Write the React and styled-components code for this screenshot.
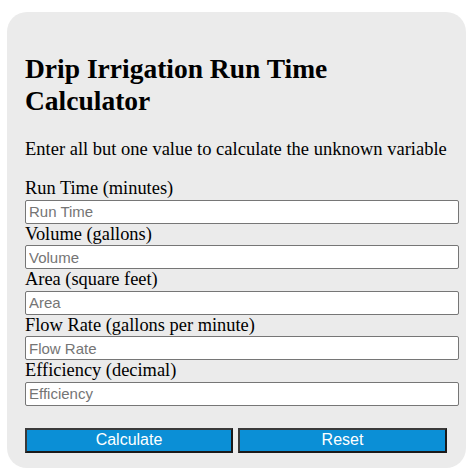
import React from 'react';
import styled, { createGlobalStyle } from 'styled-components';

const GlobalStyle = createGlobalStyle`
  html, body {
    margin: 0;
    padding: 0;
    background: #ffffff;
  }
  body {
    font-family: "Liberation Serif", "Times New Roman", serif;
    color: #000;
  }
`;

const Page = styled.div`
  padding: 12px 8px 3px 7px;
`;

const Card = styled.div`
  background-color: #ebebeb;
  border-radius: 20px;
  padding: 20px 19px 15px 18px;
  width: 422px;
`;

const Title = styled.h2`
  font-size: 27.5px;
  font-weight: bold;
  line-height: 32px;
  margin: 21px 0 21px;
`;

const Intro = styled.p`
  font-size: 18.5px;
  line-height: 22px;
  white-space: nowrap;
  margin: 0 0 18px;
`;

const Field = styled.div`
  display: flex;
  flex-direction: column;
`;

const Label = styled.label`
  font-size: 18.4px;
  line-height: 21.5px;
`;

const Input = styled.input`
  box-sizing: border-box;
  width: 434px;
  height: 24px;
  padding: 1px 3px;
  border: 1px solid #767676;
  border-radius: 2px;
  background: #fff;
  font-family: "Liberation Sans", Arial, sans-serif;
  font-size: 15px;

  &::placeholder {
    color: #757575;
  }
`;

const ButtonRow = styled.div`
  display: grid;
  grid-template-columns: 208px 209px;
  column-gap: 5px;
  margin-top: 22px;
`;

const Button = styled.button`
  height: 25px;
  background-color: #0b8fd6;
  color: #fff;
  border: 2px solid #1a1a1a;
  border-top-color: #3a3a3a;
  border-left-color: #3a3a3a;
  font-family: "Liberation Sans", Arial, sans-serif;
  font-size: 16px;
  padding: 0;
  cursor: pointer;
`;

const fields = [
  { label: 'Run Time (minutes)', placeholder: 'Run Time' },
  { label: 'Volume (gallons)', placeholder: 'Volume' },
  { label: 'Area (square feet)', placeholder: 'Area' },
  { label: 'Flow Rate (gallons per minute)', placeholder: 'Flow Rate' },
  { label: 'Efficiency (decimal)', placeholder: 'Efficiency' },
];

const App = () => (
  <Page>
    <GlobalStyle />
    <Card>
      <Title>Drip Irrigation Run Time Calculator</Title>
      <Intro>Enter all but one value to calculate the unknown variable</Intro>
      {fields.map((f) => (
        <Field key={f.label}>
          <Label>{f.label}</Label>
          <Input type="text" placeholder={f.placeholder} />
        </Field>
      ))}
      <ButtonRow>
        <Button>Calculate</Button>
        <Button>Reset</Button>
      </ButtonRow>
    </Card>
  </Page>
);

export default App;
